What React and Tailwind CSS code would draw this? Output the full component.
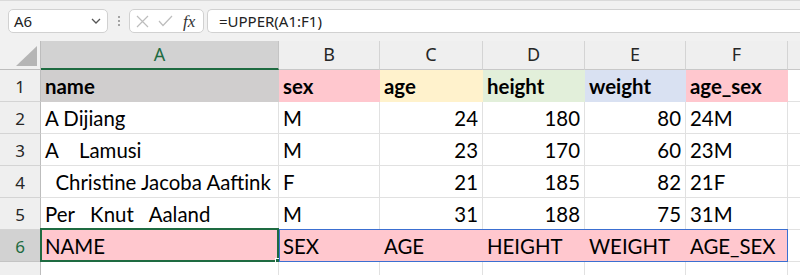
import React from 'react';

const cols = [
  { key: 'A', w: 'w-[238px]' },
  { key: 'B', w: 'w-[101px]' },
  { key: 'C', w: 'w-[103px]' },
  { key: 'D', w: 'w-[102px]' },
  { key: 'E', w: 'w-[101px]' },
  { key: 'F', w: 'w-[102px]' },
];

const rows = [
  {
    n: 1,
    bold: true,
    cells: [
      { t: 'name', bg: 'bg-[#d0cece] border-[#d0cece]' },
      { t: 'sex', bg: 'bg-[#ffc7ce] border-[#ffc7ce]' },
      { t: 'age', bg: 'bg-[#fff2cc] border-[#fff2cc]' },
      { t: 'height', bg: 'bg-[#e2efda] border-[#e2efda]' },
      { t: 'weight', bg: 'bg-[#d9e1f2] border-[#d9e1f2]' },
      { t: 'age_sex', bg: 'bg-[#ffc7ce] border-[#ffc7ce]' },
    ],
  },
  { n: 2, cells: [{ t: 'A Dijiang' }, { t: 'M' }, { t: '24', r: true }, { t: '180', r: true }, { t: '80', r: true }, { t: '24M' }] },
  { n: 3, cells: [{ t: 'A    Lamusi' }, { t: 'M' }, { t: '23', r: true }, { t: '170', r: true }, { t: '60', r: true }, { t: '23M' }] },
  { n: 4, cells: [{ t: '  Christine Jacoba Aaftink' }, { t: 'F' }, { t: '21', r: true }, { t: '185', r: true }, { t: '82', r: true }, { t: '21F' }] },
  { n: 5, cells: [{ t: 'Per   Knut   Aaland' }, { t: 'M' }, { t: '31', r: true }, { t: '188', r: true }, { t: '75', r: true }, { t: '31M' }] },
];

const pink = 'bg-[#ffc7ce] border-[#ffc7ce]';
const spill = ['NAME', 'SEX', 'AGE', 'HEIGHT', 'WEIGHT', 'AGE_SEX'];

function Cell({ w, t, bg, r, bold, children }) {
  return (
    <div
      className={`${w} h-full shrink-0 border-r border-b ${bg || 'bg-white border-[#e1e1e1]'} ${r ? 'text-right pr-[4px]' : 'pl-[4px]'} ${bold ? 'font-bold' : ''} pt-[3px] leading-[27px] whitespace-pre overflow-visible relative`}
    >
      {t}
      {children}
    </div>
  );
}

function RowHead({ n, active }) {
  return (
    <div
      className={`w-[41px] h-full shrink-0 border-b border-r ${active ? 'bg-[#d2d2d2] text-[#1e6b41] border-b-[#c4c4c4] border-r-[#1e6b41]' : 'bg-[#efefef] text-[#262626] border-[#d4d4d4] border-r-[#bdbdbd]'} text-center font-['Noto_Sans',sans-serif] text-[17px] pt-[3px] leading-[27px]`}
    >
      {n}
    </div>
  );
}

export default function App() {
  return (
    <div className="w-[800px] h-[275px] overflow-hidden bg-white font-['Lato',sans-serif] text-[20.4px] text-black">
      {/* formula bar */}
      <div className="h-[41px] bg-[#f1f1f1] border-t border-[#dadada] flex items-start pt-[8px] pl-[8px]">
        <div className="w-[100px] h-[24px] bg-white border border-[#d1d1d1] rounded-[5px] flex items-center justify-between pl-[5px] pr-[6px]">
          <span className="font-['Noto_Sans',sans-serif] text-[15px] text-[#222]">A6</span>
          <svg width="10" height="6" viewBox="0 0 10 6">
            <polyline points="1,1 5,5 9,1" fill="none" stroke="#555" strokeWidth="1.3" />
          </svg>
        </div>
        <div className="w-[21px] h-[24px] flex flex-col items-center justify-center gap-[2px]">
          <span className="w-[2px] h-[2px] bg-[#8a8a8a] rounded-full" />
          <span className="w-[2px] h-[2px] bg-[#8a8a8a] rounded-full" />
          <span className="w-[2px] h-[2px] bg-[#8a8a8a] rounded-full" />
        </div>
        <div className="w-[75px] h-[24px] bg-white border border-[#d1d1d1] rounded-[5px] flex items-center pl-[6px] gap-[9px]">
          <svg width="13" height="13" viewBox="0 0 13 13">
            <path d="M1 1 L12 12 M12 1 L1 12" stroke="#bdbdbd" strokeWidth="1.2" fill="none" />
          </svg>
          <svg width="15" height="12" viewBox="0 0 15 12">
            <polyline points="1,6 5,10.5 14,1" stroke="#bdbdbd" strokeWidth="1.2" fill="none" />
          </svg>
          <span className="font-['Liberation_Serif',serif] italic text-[17px] text-[#333] leading-none ml-[1px]">fx</span>
        </div>
        <div className="flex-1 h-[24px] ml-[3px] bg-white border border-r-0 border-[#d1d1d1] rounded-l-[5px] flex items-center pl-[11px]">
          <span className="font-['Noto_Sans',sans-serif] text-[15px] text-[#222]">=UPPER(A1:F1)</span>
        </div>
      </div>

      {/* column headers */}
      <div className="flex h-[29px]">
        <div className="w-[41px] h-full shrink-0 bg-[#f1f1f1] border-r border-b border-[#bdbdbd]">
          <svg width="41" height="28" viewBox="0 0 41 28">
            <polygon points="16,25 37,25 37,5" fill="#b5b5b5" />
          </svg>
        </div>
        {cols.map((c) => (
          <div
            key={c.key}
            className={`${c.w} h-full shrink-0 border-r text-center font-['Noto_Sans',sans-serif] text-[18px] leading-[27px] ${c.key === 'A' ? 'bg-[#d2d2d2] text-[#1e6b41] border-[#c4c4c4] border-b-2 border-b-[#1e6b41]' : 'bg-[#efefef] text-[#262626] border-[#d4d4d4] border-b border-b-[#c8c8c8]'}`}
          >
            {c.key}
          </div>
        ))}
        <div className="flex-1 h-full bg-[#efefef] border-b border-[#c8c8c8]" />
      </div>

      {/* data rows */}
      {rows.map((row) => (
        <div key={row.n} className="flex h-[32px]">
          <RowHead n={row.n} />
          {row.cells.map((c, i) => (
            <Cell key={i} w={cols[i].w} t={c.t} bg={c.bg} r={c.r} bold={row.bold} />
          ))}
          <div className="flex-1 h-full border-b border-[#e1e1e1]" />
        </div>
      ))}

      {/* spilled UPPER row */}
      <div className="flex h-[32px] relative">
        <RowHead n={6} active />
        {spill.map((t, i) => (
          <Cell key={i} w={cols[i].w} t={t} bg={pink}>
            {i === 0 && (
              <>
                <div className="absolute -top-[2px] -left-[1px] -right-[1px] -bottom-[1px] border-2 border-[#1e6b41] pointer-events-none" />
                <div className="absolute -right-[4px] -bottom-[4px] w-[7px] h-[7px] bg-[#1e6b41] border border-white" />
              </>
            )}
          </Cell>
        ))}
        <div className="flex-1 h-full border-b border-[#e1e1e1]" />
        <div className="absolute left-[279px] -top-[1px] w-[509px] h-[33px] border border-[#3b6fd1] pointer-events-none" />
      </div>

      <div className="flex h-[32px]">
        <RowHead n="" />
        {cols.map((c) => (
          <Cell key={c.key} w={c.w} t="" />
        ))}
        <div className="flex-1 h-full border-b border-[#e1e1e1]" />
      </div>
    </div>
  );
}
